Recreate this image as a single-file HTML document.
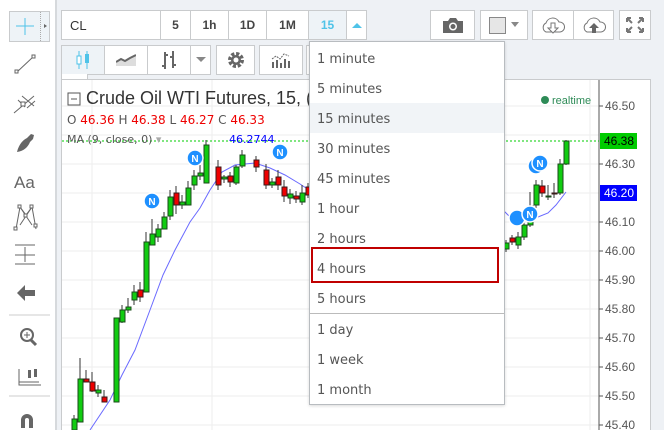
<!DOCTYPE html>
<html><head><meta charset="utf-8"><style>
*{margin:0;padding:0;box-sizing:border-box}
body{width:664px;height:430px;overflow:hidden;background:#eef1f5;font-family:"Liberation Sans","DejaVu Sans",sans-serif;position:relative}
.a{position:absolute}
.btn{position:absolute;background:#fff;border:1px solid #c9cbcd;display:flex;align-items:center;justify-content:center;font-size:12px;color:#444}
.dd{position:absolute;left:309px;top:41px;width:196px;height:364px;background:#fff;border:1px solid #b8bcc0;box-shadow:0 1px 3px rgba(0,0,0,.15)}
.it{position:absolute;left:7px;color:#555;font-family:"DejaVu Sans",sans-serif;font-size:13px}
</style></head><body>
<div class="a" style="left:0;top:0;width:55px;height:430px;background:#fff"></div>
<div class="a" style="left:55px;top:0;width:2px;height:430px;background:#d6d9dc"></div>
<div class="a" style="left:9px;top:11px;width:41px;height:31px;background:#eef3f7;border:1px solid #c9cbcd"></div>
<div class="a" style="left:40px;top:12px;width:0;height:29px;border-left:1px dotted #aaa"></div>
<svg class="a" style="left:0;top:0" width="55" height="430">
<g stroke="#4fc3e8" stroke-width="1"><line x1="25" y1="18" x2="25" y2="35"/><line x1="16" y1="26" x2="34" y2="26"/></g>
<path d="M44 24l3 2-3 2z" fill="#666"/>
<g stroke="#666" fill="#fff" stroke-width="1"><line x1="17" y1="72" x2="33" y2="57"/><rect x="15" y="70" width="3" height="3"/><rect x="32" y="55" width="3" height="3"/>
<path d="M14 113l20-17M18 100l7 7M22 96l12 10M27 108l8-7" fill="none"/><rect x="21" y="102" width="4" height="4"/>
</g>
<path d="M17 152c2-8 6-12 10-14l4-4 3 1-1 4-3 3c-2 5-6 9-13 10z" fill="#666"/>
<text x="14" y="188" font-size="17" fill="#666" font-family="Liberation Sans">Aa</text>
<g stroke="#666" fill="#fff" stroke-width="1"><path d="M16 229l4-22 6 8 6-8 4 22M20 207l12 18M32 207l-12 18" fill="none"/><rect x="14" y="227" width="3" height="3"/><rect x="18" y="205" width="3" height="3"/><rect x="30" y="205" width="3" height="3"/><rect x="34" y="224" width="3" height="3"/><rect x="24" y="214" width="3" height="3"/></g>
<g stroke="#666"><line x1="15" y1="245" x2="35" y2="245"/><line x1="15" y1="255" x2="35" y2="255"/><line x1="15" y1="264" x2="35" y2="264"/><line x1="25" y1="247" x2="25" y2="262"/></g>
<path d="M17 293l8-8v5h10v6H25v5z" fill="#666"/>
<line x1="9" y1="315" x2="50" y2="315" stroke="#ccc"/>
<circle cx="27" cy="335" r="6" fill="none" stroke="#666" stroke-width="2"/><line x1="31" y1="340" x2="36" y2="345" stroke="#666" stroke-width="3"/><path d="M24 335h6M27 332v6" stroke="#666"/>
<path d="M19 369v16h22M19 382h20" stroke="#666" fill="none"/><rect x="28" y="370" width="3" height="8" fill="#666"/><rect x="34" y="369" width="3" height="8" fill="#666"/>
<line x1="9" y1="396" x2="50" y2="396" stroke="#ccc"/>
<path d="M21 428v-8a6 6 0 0 1 12 0v8h-4v-8a2 2 0 0 0-4 0v8z" fill="#666"/>
</svg>
<div class="btn" style="left:61px;top:10px;width:100px;height:30px;justify-content:flex-start;padding-left:8px;font-size:13px;color:#333">CL</div>
<div class="btn" style="left:160px;top:10px;width:31px;height:30px;font-weight:bold">5</div>
<div class="btn" style="left:190px;top:10px;width:39px;height:30px;font-weight:bold">1h</div>
<div class="btn" style="left:228px;top:10px;width:39px;height:30px;font-weight:bold">1D</div>
<div class="btn" style="left:266px;top:10px;width:43px;height:30px;font-weight:bold">1M</div>
<div class="btn" style="left:308px;top:10px;width:39px;height:30px;font-weight:bold;color:#4fc3e8;background:#eef3f7">15</div>
<div class="btn" style="left:346px;top:10px;width:21px;height:30px"><svg width="10" height="6"><path d="M0 6l5-5 5 5z" fill="#4fc3e8"/></svg></div>
<div class="btn" style="left:430px;top:10px;width:45px;height:30px"><svg width="20" height="16"><path d="M0 4h5l2-3h6l2 3h5v12H0z" fill="#666"/><circle cx="10" cy="9.5" r="4" fill="#fff"/><circle cx="10" cy="9.5" r="2.5" fill="#666"/></svg></div>
<div class="btn" style="left:480px;top:10px;width:48px;height:30px;justify-content:flex-start;padding-left:8px"><div style="width:17px;height:17px;background:#e6e6e6;border:1px solid #888"></div><svg width="16" height="6" style="margin-left:5px"><path d="M0 0h8l-4 5z" fill="#888"/></svg></div>
<div class="btn" style="left:532px;top:10px;width:42px;height:30px"><svg width="26" height="18"><path d="M6 16a5 5 0 0 1 0-9 7 7 0 0 1 13-1 5 5 0 0 1 1 10z" fill="none" stroke="#777"/><path d="M11 7v5H8l5 5 5-5h-3V7z" fill="#fff" stroke="#777"/></svg></div>
<div class="btn" style="left:573px;top:10px;width:41px;height:30px"><svg width="26" height="18"><path d="M6 16a5 5 0 0 1 0-9 7 7 0 0 1 13-1 5 5 0 0 1 1 10z" fill="none" stroke="#777"/><path d="M11 17v-5H8l5-5 5 5h-3v5z" fill="#666"/></svg></div>
<div class="btn" style="left:619px;top:10px;width:32px;height:30px"><svg width="18" height="16" stroke="#777" stroke-width="2" fill="none"><path d="M1 1l5 5M1 1h4M1 1v4M17 1l-5 5M17 1h-4M17 1v4M1 15l5-5M1 15h4M1 15v-4M17 15l-5-5M17 15h-4M17 15v-4"/></svg></div>
<div class="btn" style="left:61px;top:45px;width:44px;height:30px;background:#eef3f7"><svg width="14" height="20"><path d="M3 1v18M11 1v18" stroke="#4fc3e8"/><rect x="1" y="6" width="4" height="8" fill="#fff" stroke="#4fc3e8"/><rect x="9" y="4" width="4" height="9" fill="#4fc3e8"/></svg></div>
<div class="btn" style="left:104px;top:45px;width:44px;height:30px"><svg width="20" height="12"><path d="M0 12V8l5-3 4 2 5-3 6-3v11z" fill="#ddd"/><path d="M0 8l5-3 4 2 5-3 6-3" stroke="#666" stroke-width="2" fill="none"/></svg></div>
<div class="btn" style="left:147px;top:45px;width:44px;height:30px"><svg width="16" height="20" stroke="#666" stroke-width="2" fill="none"><path d="M4 2v17M1 16h3M4 5h3M12 1v17M9 7h3M12 15h3"/></svg></div>
<div class="btn" style="left:190px;top:45px;width:21px;height:30px"><svg width="10" height="6"><path d="M0 0h10l-5 5z" fill="#888"/></svg></div>
<div class="btn" style="left:216px;top:45px;width:39px;height:30px"><svg width="18" height="18"><circle cx="9" cy="9" r="6" fill="none" stroke="#666" stroke-width="4" stroke-dasharray="3 1.7"/><circle cx="9" cy="9" r="5" fill="#666"/><circle cx="9" cy="9" r="2.5" fill="#fff"/></svg></div>
<div class="btn" style="left:259px;top:45px;width:44px;height:30px"><svg width="20" height="16"><g fill="#666"><rect x="1" y="10" width="2" height="6"/><rect x="5" y="8" width="2" height="8"/><rect x="9" y="11" width="2" height="5"/><rect x="13" y="7" width="2" height="9"/><rect x="17" y="9" width="2" height="7"/></g><path d="M1 7l4-3 4 3 4-5 5 2" stroke="#666" fill="none" stroke-dasharray="2 1"/></svg></div>
<div class="btn" style="left:306px;top:45px;width:8px;height:30px"></div>
<div class="a" style="left:61px;top:79px;width:590px;height:351px;background:#fff;border-top:1px solid #c9cbcd;border-left:1px solid #c9cbcd;border-right:1px solid #c9cbcd"></div>
<div class="a" style="left:61px;top:74px;width:27px;height:6px;background:#fff;border:1px solid #c9cbcd;border-top:none"></div>
<svg class="a" style="left:0;top:0" width="664" height="430">
<g stroke="#eeeeee"><line x1="92" y1="80" x2="92" y2="430"/><line x1="212" y1="80" x2="212" y2="430"/><line x1="590" y1="80" x2="590" y2="430"/>
<line x1="62" y1="106" x2="599" y2="106"/><line x1="62" y1="135" x2="599" y2="135"/><line x1="62" y1="164" x2="599" y2="164"/><line x1="62" y1="193" x2="599" y2="193"/><line x1="62" y1="222" x2="599" y2="222"/><line x1="62" y1="251" x2="599" y2="251"/><line x1="62" y1="280" x2="599" y2="280"/><line x1="62" y1="309" x2="599" y2="309"/><line x1="62" y1="338" x2="599" y2="338"/><line x1="62" y1="367" x2="599" y2="367"/><line x1="62" y1="396" x2="599" y2="396"/><line x1="62" y1="425" x2="599" y2="425"/></g>
<line x1="599" y1="80" x2="599" y2="430" stroke="#555"/>
<g stroke="#555">
<line x1="599" y1="106" x2="603" y2="106"/><line x1="599" y1="164" x2="603" y2="164"/><line x1="599" y1="222" x2="603" y2="222"/><line x1="599" y1="251" x2="603" y2="251"/><line x1="599" y1="280" x2="603" y2="280"/><line x1="599" y1="309" x2="603" y2="309"/><line x1="599" y1="338" x2="603" y2="338"/><line x1="599" y1="367" x2="603" y2="367"/><line x1="599" y1="396" x2="603" y2="396"/><line x1="599" y1="425" x2="603" y2="425"/></g>
<g font-size="12" fill="#555" font-family="Liberation Sans">
<text x="605" y="110">46.50</text><text x="605" y="168">46.30</text><text x="605" y="226">46.10</text><text x="605" y="255">46.00</text><text x="605" y="284">45.90</text><text x="605" y="313">45.80</text><text x="605" y="342">45.70</text><text x="605" y="371">45.60</text><text x="605" y="400">45.50</text><text x="605" y="429">45.40</text></g>
<rect x="600" y="133" width="37" height="16" fill="#00cc00"/><text x="604" y="145" font-size="12" fill="#000">46.38</text>
<rect x="600" y="185" width="37" height="16" fill="#0000ff"/><text x="604" y="197" font-size="12" fill="#fff">46.20</text>
<line x1="62" y1="141" x2="599" y2="141" stroke="#00cc00" stroke-dasharray="2 2"/>
<path d="M90 430L110 400L122 375L135 350L150 310L163 275L175 250L190 222L200 208L210 190L222 172L235 165L255 163L270 168L285 175L300 184L312 192" stroke="#6a6aff" fill="none"/>
<path d="M503 210L515 222L528 220L538 217L548 213L556 205L566 192" stroke="#6a6aff" fill="none"/>
<g stroke="#333" stroke-width="1">
<path d="M74 415v15M80 358v64M86 370v12M92 372v20M98 385v12M104 390v12M116 318v60M122 305v18M128 298v15M134 285v20M140 282v20M146 232v60M152 219v26M158 224v18M164 212v17M170 190v30M176 186v28M182 195v14M188 181v24M194 170v20M200 165v15M206 140v43M218 160v30M224 175v8M230 172v15M236 165v20M242 150v18M256 156v16M266 164v25M272 178v10M278 170v20M284 180v22M290 189v15M296 191v12M302 185v20M308 183v15M506 240v12M512 235v10M518 232v17M524 222v18M530 192v35M536 180v28M542 180v17M548 185v15M554 183v15M560 159v36M566 140v25"/>
</g>
<g fill="#11cc11" stroke="#1a4a1a">
<rect x="72" y="419" width="5" height="11"/><rect x="78" y="379" width="5" height="43"/><rect x="96" y="390" width="5" height="3"/><rect x="114" y="318" width="5" height="84"/><rect x="120" y="310" width="5" height="12"/><rect x="126" y="307" width="5" height="3"/><rect x="132" y="292" width="5" height="8"/><rect x="144" y="242" width="5" height="50"/><rect x="150" y="234" width="5" height="11"/><rect x="156" y="229" width="5" height="8"/><rect x="162" y="217" width="5" height="12"/><rect x="168" y="197" width="5" height="19"/><rect x="180" y="202" width="5" height="3"/><rect x="186" y="188" width="5" height="17"/><rect x="192" y="176" width="5" height="9"/><rect x="198" y="173" width="5" height="3"/><rect x="204" y="145" width="5" height="38"/><rect x="222" y="177" width="5" height="2"/><rect x="234" y="167" width="5" height="16"/><rect x="240" y="155" width="5" height="11"/><rect x="270" y="182" width="5" height="3"/><rect x="288" y="194" width="5" height="4"/><rect x="300" y="193" width="5" height="9"/>
<rect x="504" y="243" width="5" height="6"/><rect x="516" y="237" width="5" height="8"/><rect x="522" y="225" width="5" height="12"/><rect x="528" y="206" width="5" height="19"/><rect x="534" y="185" width="5" height="20"/><rect x="546" y="196" width="5" height="1"/><rect x="558" y="164" width="5" height="29"/><rect x="564" y="141" width="5" height="23"/></g>
<g fill="#ee0000" stroke="#3a1a1a">
<rect x="84" y="379" width="5" height="3"/><rect x="90" y="382" width="5" height="9"/><rect x="102" y="397" width="5" height="5"/><rect x="138" y="290" width="5" height="7"/><rect x="174" y="193" width="5" height="12"/><rect x="216" y="167" width="5" height="18"/><rect x="228" y="176" width="5" height="6"/><rect x="254" y="160" width="5" height="7"/><rect x="264" y="170" width="5" height="15"/><rect x="276" y="177" width="5" height="8"/><rect x="282" y="187" width="5" height="9"/><rect x="294" y="196" width="5" height="3"/><rect x="306" y="187" width="5" height="8"/><rect x="510" y="238" width="5" height="4"/><rect x="540" y="186" width="5" height="7"/><rect x="552" y="193" width="5" height="1"/></g>
<g fill="#1e90ff" stroke="#fff" stroke-width="1.5"><circle cx="152" cy="201" r="8"/><circle cx="195" cy="158" r="8"/><circle cx="280" cy="152" r="8"/><circle cx="517" cy="218" r="8"/><circle cx="530" cy="214" r="8"/><circle cx="536" cy="166" r="8"/><circle cx="540" cy="163" r="8"/></g>
<g font-size="10" font-weight="bold" fill="#fff" font-family="Liberation Sans" text-anchor="middle"><text x="152" y="205">N</text><text x="195" y="162">N</text><text x="280" y="156">N</text><text x="530" y="218">N</text><text x="540" y="167">N</text></g>
<circle cx="545" cy="100" r="4" fill="#2e8b57"/><text x="552" y="104" font-size="11" fill="#2e8b57">realtime</text>
<rect x="68" y="93" width="12" height="12" fill="#fff" stroke="#555"/><line x1="71" y1="99" x2="77" y2="99" stroke="#555"/>
</svg>
<div class="a" style="left:86px;top:88px;font-size:18px;color:#333;font-family:'Liberation Sans',sans-serif;white-space:nowrap">Crude Oil WTI Futures, 15, (C</div>
<div class="a" style="left:67px;top:113px;font-size:12px;color:#555;font-family:'DejaVu Sans',sans-serif;white-space:nowrap">O <span style="color:#e00">46.36</span> H <span style="color:#e00">46.38</span> L <span style="color:#e00">46.27</span> C <span style="color:#e00">46.33</span></div>
<div class="a" style="left:67px;top:133px;font-size:11px;color:#555;font-family:'DejaVu Sans',sans-serif;white-space:nowrap">MA (9, close, 0) <span style="color:#aaa">▾</span></div>
<div class="a" style="left:229px;top:133px;font-size:11px;color:#00f;font-family:'DejaVu Sans',sans-serif">46.2744</div>
<div class="dd">
<div class="a" style="left:0;top:61px;width:194px;height:30px;background:#f1f4f7"></div>
<div class="a" style="left:1px;top:205px;width:188px;height:36px;border:2px solid #c00000"></div>
<div class="a" style="left:0;top:271px;width:194px;height:1px;background:#bbb"></div>
<div class="it" style="top:10px">1 minute</div>
<div class="it" style="top:40px">5 minutes</div>
<div class="it" style="top:70px">15 minutes</div>
<div class="it" style="top:100px">30 minutes</div>
<div class="it" style="top:130px">45 minutes</div>
<div class="it" style="top:160px">1 hour</div>
<div class="it" style="top:190px">2 hours</div>
<div class="it" style="top:220px">4 hours</div>
<div class="it" style="top:250px">5 hours</div>
<div class="it" style="top:281px">1 day</div>
<div class="it" style="top:311px">1 week</div>
<div class="it" style="top:341px">1 month</div>
</div>
</body></html>
